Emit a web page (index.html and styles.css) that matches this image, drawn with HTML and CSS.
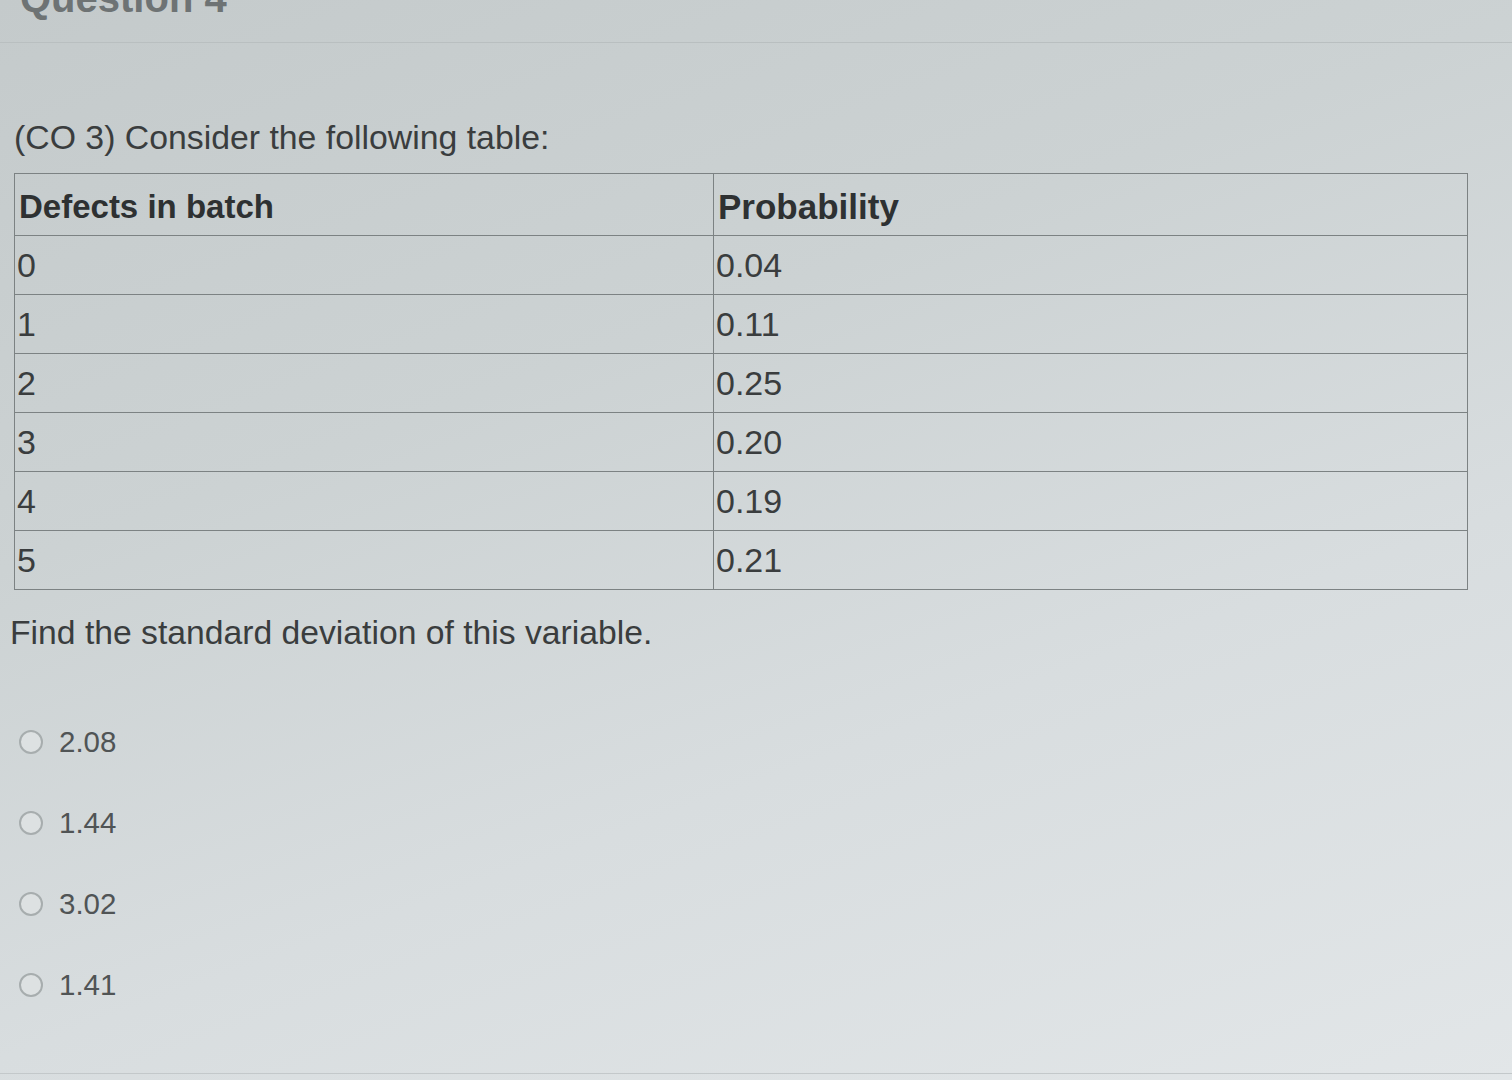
FILE: index.html
```html
<!DOCTYPE html>
<html>
<head>
<meta charset="utf-8">
<link rel="stylesheet" href="styles.css">
</head>
<body>
<div class="page">
  <div class="qhead"><h1 class="qtitle">Question 4</h1></div>
  <div class="qbody">
    <p class="prompt">(CO 3) Consider the following table:</p>
    <table class="dist">
      <thead>
        <tr><th class="c1">Defects in batch</th><th class="c2">Probability</th></tr>
      </thead>
      <tbody>
        <tr><td class="c1">0</td><td>0.04</td></tr>
        <tr><td class="c1">1</td><td>0.11</td></tr>
        <tr><td class="c1">2</td><td>0.25</td></tr>
        <tr><td class="c1">3</td><td>0.20</td></tr>
        <tr><td class="c1">4</td><td>0.19</td></tr>
        <tr><td class="c1">5</td><td>0.21</td></tr>
      </tbody>
    </table>
    <p class="ask">Find the standard deviation of this variable.</p>
    <ul class="options">
      <li class="opt"><span class="radio"></span><span class="val">2.08</span></li>
      <li class="opt"><span class="radio"></span><span class="val">1.44</span></li>
      <li class="opt"><span class="radio"></span><span class="val">3.02</span></li>
      <li class="opt"><span class="radio"></span><span class="val">1.41</span></li>
    </ul>
  </div>
  <div class="qfoot"></div>
</div>
</body>
</html>
```
FILE: styles.css
```css
html, body {
  margin: 0;
  padding: 0;
}
body {
  width: 1512px;
  height: 1080px;
  overflow: hidden;
  font-family: "Liberation Sans", Arial, sans-serif;
  background: linear-gradient(160deg, #c4cacb 0%, #ccd2d3 35%, #d8dddf 65%, #e2e6e8 100%);
  color: #3c3f40;
}
.page {
  display: flex;
  flex-direction: column;
  height: 1080px;
}
.qhead {
  height: 42px;
  border-bottom: 1px solid #b9bfc0;
  overflow: hidden;
  padding-left: 20px;
}
.qtitle {
  margin: -26px 0 0 0;
  font-size: 40px;
  font-weight: bold;
  color: #6e7374;
  line-height: 48px;
}
.qbody {
  flex: 1;
  padding-left: 14px;
}
.prompt {
  margin: 74px 0 0 0;
  font-size: 33.8px;
  line-height: 40px;
  color: #3a3d3e;
}
.dist {
  margin-top: 16px;
  width: 1454px;
  border-collapse: collapse;
  border: 1px solid #7c8283;
  font-size: 34px;
}
.dist th, .dist td {
  border: 1px solid #7c8283;
  text-align: left;
  padding: 0 4px;
  vertical-align: middle;
}
.dist th {
  height: 57px;
  font-weight: bold;
  font-size: 33px;
  color: #2e3132;
  padding-top: 4px;
}
.dist th.c2 {
  font-size: 35px;
}
.dist td {
  height: 58px;
  font-weight: normal;
  color: #3a3d3e;
  padding-left: 2px;
}
.dist .c1 {
  width: 690px;
}
.ask {
  margin: 22px 0 0 -4px;
  font-size: 33.7px;
  line-height: 40px;
  color: #3a3d3e;
}
.options {
  list-style: none;
  margin: 73px 0 0 0;
  padding: 0;
  display: flex;
  flex-direction: column;
  gap: 47px;
}
.opt {
  display: flex;
  align-items: center;
  gap: 16px;
  height: 34px;
  padding-left: 5px;
}
.radio {
  width: 24px;
  height: 24px;
  border-radius: 50%;
  border: 2px solid #a7adae;
  background: #dde1e2;
  box-sizing: border-box;
}
.val {
  font-size: 29.5px;
  color: #505455;
}
.qfoot {
  height: 6px;
  border-top: 1px solid #c3c8ca;
}
```
